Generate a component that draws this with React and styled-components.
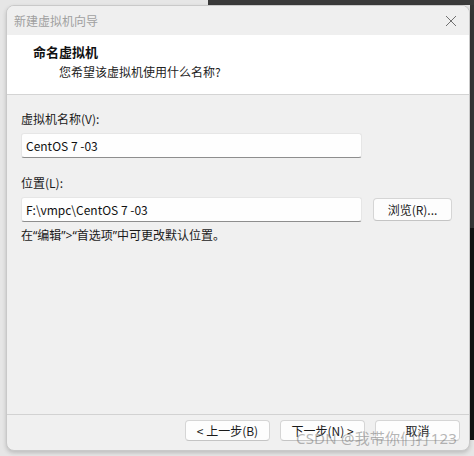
import React from "react";
import styled, { createGlobalStyle } from "styled-components";

const GlobalStyle = createGlobalStyle`
  html, body {
    margin: 0;
    padding: 0;
    width: 474px;
    height: 456px;
    overflow: hidden;
  }
  body {
    font-family: "Noto Sans CJK SC", "Noto Sans", sans-serif;
    background-color: #e6e6e6;
    background-image:
      linear-gradient(#3a3a3a, #3a3a3a),
      linear-gradient(#363636, #363636),
      linear-gradient(#121212, #121212);
    background-repeat: no-repeat;
    background-size: 266px 5px, 4px 228px, 4px 212px;
    background-position: 208px 0, 470px 0, 470px 228px;
  }
`;

const Desktop = styled.div`
  padding: 5px 4px 5px 6px;
  width: 474px;
  height: 456px;
  box-sizing: border-box;
`;

const Dialog = styled.div`
  height: 100%;
  display: flex;
  flex-direction: column;
  background: #f0f0f0;
  border: 1px solid #c9c9c9;
  border-radius: 8px;
  box-shadow: 0 2px 4px rgba(0, 0, 0, 0.18);
  box-sizing: border-box;
  overflow: hidden;
  position: relative;
`;

const TitleBar = styled.div`
  height: 29px;
  display: flex;
  align-items: center;
  justify-content: space-between;
  padding: 0 10px 0 7px;
  background: #efefef;
  font-size: 12px;
  color: #a0a0a0;
`;

const CloseIcon = styled.svg`
  width: 12px;
  height: 12px;
  margin-right: 2px;
`;

const Header = styled.div`
  height: 60px;
  background: #ffffff;
  border-bottom: 1px solid #d4d4d4;
  padding: 7px 0 0 26px;
  box-sizing: border-box;
`;

const HeaderTitle = styled.div`
  font-size: 13px;
  font-weight: 700;
  color: #111;
  line-height: 20px;
`;

const HeaderSub = styled.div`
  font-size: 12px;
  color: #222;
  line-height: 20px;
  padding-left: 26px;
`;

const Body = styled.div`
  flex: 1;
  padding: 15px 0 0 14px;
  display: flex;
  flex-direction: column;
`;

const Label = styled.div`
  font-size: 12px;
  color: #1a1a1a;
  line-height: 18px;
  margin-bottom: 5px;
`;

const Row = styled.div`
  display: flex;
  align-items: center;
  gap: 11px;
  margin-bottom: ${(p) => p.$mb || 0}px;
`;

const TextBox = styled.div`
  width: 341px;
  height: 25px;
  box-sizing: border-box;
  background: #fefefe;
  border: 1px solid #e6e6e6;
  border-bottom: 1px solid #8e8e8e;
  border-radius: 3px;
  padding: 0 4px;
  display: flex;
  align-items: center;
  font-size: 12px;
  color: #111;
`;

const Button = styled.button`
  width: ${(p) => p.$w || 85}px;
  height: ${(p) => p.$h || 21}px;
  box-sizing: border-box;
  background: #fdfdfd;
  border: 1px solid #d5d5d5;
  border-bottom-color: #c4c4c4;
  border-radius: 4px;
  font-family: inherit;
  font-size: 12px;
  color: #1a1a1a;
  padding: 0;
  display: flex;
  align-items: center;
  justify-content: center;
`;

const Note = styled.div`
  font-family: "Noto Sans", "Noto Sans CJK SC", sans-serif;
  font-size: 12px;
  color: #1a1a1a;
  line-height: 18px;
  margin-top: 5px;
`;

const Footer = styled.div`
  height: 36px;
  border-top: 1px solid #d2d2d2;
  display: flex;
  align-items: center;
  justify-content: flex-end;
  gap: 10px;
  padding: 0 9px 4px 0;
  box-sizing: border-box;
`;

const Watermark = styled.div`
  position: absolute;
  right: 12px;
  bottom: 2px;
  font-family: "Noto Sans", "Noto Sans CJK SC", sans-serif;
  font-size: 15px;
  color: rgba(120, 120, 120, 0.55);
  letter-spacing: 0.2px;
  pointer-events: none;
`;

export default function App() {
  return (
    <>
      <GlobalStyle />
      <Desktop>
        <Dialog>
          <TitleBar>
            <span>新建虚拟机向导</span>
            <CloseIcon viewBox="0 0 12 12">
              <path d="M1 1 L11 11 M11 1 L1 11" stroke="#707070" strokeWidth="1" fill="none" />
            </CloseIcon>
          </TitleBar>
          <Header>
            <HeaderTitle>命名虚拟机</HeaderTitle>
            <HeaderSub>您希望该虚拟机使用什么名称?</HeaderSub>
          </Header>
          <Body>
            <Label>虚拟机名称(V):</Label>
            <Row $mb={16}>
              <TextBox>CentOS 7 -03</TextBox>
            </Row>
            <Label>位置(L):</Label>
            <Row>
              <TextBox>F:\vmpc\CentOS 7 -03</TextBox>
              <Button $w={79} $h={23}>浏览(R)...</Button>
            </Row>
            <Note>在“编辑”&gt;“首选项”中可更改默认位置。</Note>
          </Body>
          <Footer>
            <Button>&lt; 上一步(B)</Button>
            <Button>下一步(N) &gt;</Button>
            <Button>取消</Button>
          </Footer>
          <Watermark>CSDN @我带你们打123</Watermark>
        </Dialog>
      </Desktop>
    </>
  );
}
